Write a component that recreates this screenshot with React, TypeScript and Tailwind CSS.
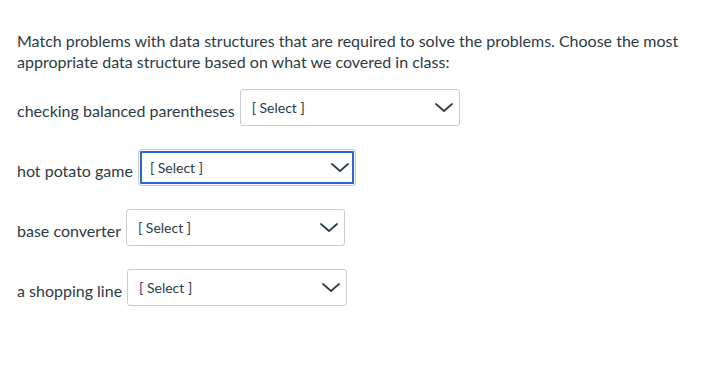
import { useState } from "react";

const rows = [
  { label: "checking balanced parentheses", width: "w-[220px]", focused: false },
  { label: "hot potato game", width: "w-[218px]", focused: true },
  { label: "base converter", width: "w-[219px]", focused: false },
  { label: "a shopping line", width: "w-[220px]", focused: false },
];

function Chevron() {
  return (
    <svg width="18" height="9" viewBox="0 0 18 9" fill="none" aria-hidden>
      <polyline points="1,1 9,8 17,1" stroke="#2d3b45" strokeWidth="1.7" strokeLinecap="round" strokeLinejoin="round" />
    </svg>
  );
}

function FakeSelect({ width, focused }: { width: string; focused: boolean }) {
  return (
    <div
      className={`${width} h-[37px] shrink-0 rounded-[3px] border border-[#c7cdd1] bg-white flex items-center justify-between pl-[11px] pr-[6px] ${
        focused ? "shadow-[inset_0_0_0_1px_#fff,inset_0_0_0_3px_#2b63d9]" : ""
      }`}
    >
      <span className="text-[14px] text-[#2d3b45] leading-none">[ Select ]</span>
      <Chevron />
    </div>
  );
}

export default function App() {
  const [rowsState] = useState(rows);

  return (
    <div className="w-[702px] h-[378px] bg-white text-[#2d3b45] font-['Lato','Liberation_Sans',sans-serif] px-[17px] pt-[30px]">
      <p className="text-[16px] leading-[21px] mb-[17px] w-[680px]">
        Match problems with data structures that are required to solve the problems. Choose the most appropriate data
        structure based on what we covered in class:
      </p>
      <div className="flex flex-col gap-[23px]">
        {rowsState.map((r) => (
          <div key={r.label} className="flex items-center gap-[5px]">
            <span className="text-[16px] leading-[19px] pt-[6px] whitespace-nowrap">{r.label}</span>
            <FakeSelect width={r.width} focused={r.focused} />
          </div>
        ))}
      </div>
    </div>
  );
}
